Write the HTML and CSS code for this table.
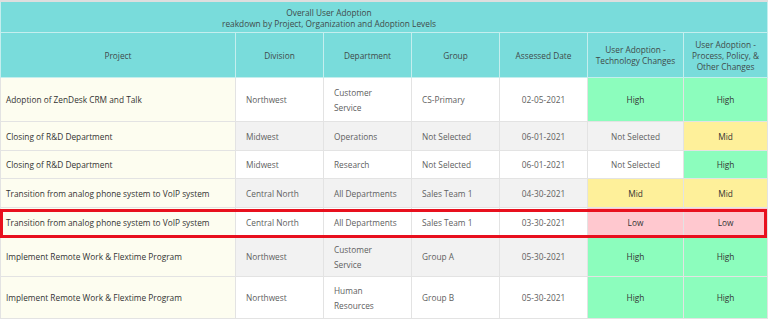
FILE: index.html
```html
<!DOCTYPE html>
<html>
<head>
<meta charset="utf-8">
<link rel="stylesheet" href="styles.css">
</head>
<body>
<div class="wrap">
<table class="grid">
<colgroup>
<col class="c-proj"><col class="c-mid"><col class="c-mid"><col class="c-mid"><col class="c-mid"><col class="c-tech"><col class="c-proc">
</colgroup>
<thead>
<tr class="r-title"><th colspan="7"><div class="title">Overall User Adoption<br>reakdown by Project, Organization and Adoption Levels</div></th></tr>
<tr class="r-head">
<th>Project</th><th>Division</th><th>Department</th><th>Group</th><th>Assessed Date</th>
<th>User Adoption -<br>Technology Changes</th><th>User Adoption -<br>Process, Policy, &amp;<br>Other Changes</th>
</tr>
</thead>
<tbody>
<tr class="h44 odd"><td class="proj">Adoption of ZenDesk CRM and Talk</td><td>Northwest</td><td class="dept">Customer<br>Service</td><td>CS-Primary</td><td class="ctr">02-05-2021</td><td class="ctr high">High</td><td class="ctr high">High</td></tr>
<tr class="h29 even"><td class="proj">Closing of R&amp;D Department</td><td>Midwest</td><td>Operations</td><td>Not Selected</td><td class="ctr">06-01-2021</td><td class="ctr">Not Selected</td><td class="ctr mid">Mid</td></tr>
<tr class="h28 odd"><td class="proj">Closing of R&amp;D Department</td><td>Midwest</td><td>Research</td><td>Not Selected</td><td class="ctr">06-01-2021</td><td class="ctr">Not Selected</td><td class="ctr high">High</td></tr>
<tr class="h29 even"><td class="proj">Transition from analog phone system to VoIP system</td><td>Central North</td><td>All Departments</td><td>Sales Team 1</td><td class="ctr">04-30-2021</td><td class="ctr mid">Mid</td><td class="ctr mid">Mid</td></tr>
<tr class="h29 odd"><td class="proj">Transition from analog phone system to VoIP system</td><td>Central North</td><td>All Departments</td><td>Sales Team 1</td><td class="ctr">03-30-2021</td><td class="ctr low">Low</td><td class="ctr low">Low</td></tr>
<tr class="h40 even"><td class="proj">Implement Remote Work &amp; Flextime Program</td><td>Northwest</td><td class="dept">Customer<br>Service</td><td>Group A</td><td class="ctr">05-30-2021</td><td class="ctr high">High</td><td class="ctr high">High</td></tr>
<tr class="h42 odd"><td class="proj">Implement Remote Work &amp; Flextime Program</td><td>Northwest</td><td class="dept">Human<br>Resources</td><td>Group B</td><td class="ctr">05-30-2021</td><td class="ctr high">High</td><td class="ctr high">High</td></tr>
</tbody>
</table>
<div class="highlight"></div>
</div>
</body>
</html>
```

FILE: styles.css
```css
html, body {
  margin: 0;
  padding: 0;
  background: #ffffff;
}
body {
  font-family: "Open Sans", "Liberation Sans", sans-serif;
  font-size: 8.3px;
  color: #555555;
}
.wrap {
  position: relative;
  width: 768px;
  border-top: 2px solid #dedede;
}
.grid {
  border-collapse: collapse;
  table-layout: fixed;
  width: 767px;
}
.c-proj { width: 235px; }
.c-mid { width: 88px; }
.c-tech { width: 96px; }
.c-proc { width: 84px; }

.grid th {
  background: #79dcdb;
  color: #3f4a4a;
  font-weight: normal;
  text-align: center;
  vertical-align: middle;
  border: 1px solid #c4eeee;
  padding: 0 4px;
  line-height: 11px;
}
.grid thead tr:first-child th {
  border-top: none;
}
.r-title th { height: 30px; padding: 0; }
.title {
  width: 656px;
  text-align: center;
  line-height: 11px;
  padding-top: 1px;
}
.r-head th { height: 44px; }

.grid td {
  border: 1px solid #e3e3e3;
  padding: 0 10px;
  vertical-align: middle;
  line-height: 15px;
  white-space: nowrap;
  color: #606060;
}
.grid td.proj {
  background: #fdfdf0;
  color: #333333;
  padding-left: 5px;
}
.odd td { background: #ffffff; }
.even td { background: #f2f2f2; }
.grid td.ctr { text-align: center; padding: 0 4px; }
.grid td.high { background: #8cfdbd; color: #333; }
.grid td.mid { background: #fef09a; color: #333; }
.grid td.low { background: #ffc8cf; color: #333; }

.h44 td { height: 43px; }
.h29 td { height: 28px; }
.h28 td { height: 27px; }
.h40 td { height: 39px; }
.h42 td { height: 41px; }

.highlight {
  position: absolute;
  left: 0;
  top: 207px;
  width: 761px;
  height: 23px;
  border: 3px solid #e8101e;
  pointer-events: none;
}
```
